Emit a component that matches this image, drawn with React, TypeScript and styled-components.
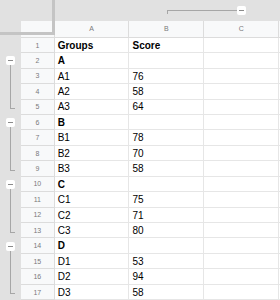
import styled, { createGlobalStyle } from "styled-components";

const GUTTER = 21;
const NUM_W = 33.7;
const COL_W = 74.8;
const HEAD_H = 16.8;
const ROW_H = 15.44;

const GlobalStyle = createGlobalStyle`
  html, body {
    margin: 0;
    padding: 0;
    background: #e1e1e1;
  }
  body {
    font-family: "Liberation Sans", Arial, sans-serif;
  }
`;

const Page = styled.div`
  position: relative;
  width: 280px;
  height: 300px;
  overflow: hidden;
  background: #e1e1e1;
  display: flex;
  flex-direction: column;
`;

const TopGutter = styled.div`
  height: ${GUTTER}px;
  flex-shrink: 0;
  display: flex;
  padding-left: ${GUTTER + NUM_W + COL_W}px;
`;

const TopSlot = styled.div<{ $kind: "start" | "button" }>`
  position: relative;
  width: ${COL_W}px;
  flex-shrink: 0;
  display: flex;
  align-items: center;
  justify-content: center;

  &::before {
    content: "";
    position: absolute;
    top: 10px;
    height: 1px;
    background: #a6a6a6;
    left: ${(p) => (p.$kind === "start" ? "50%" : "0")};
    right: ${(p) => (p.$kind === "start" ? "0" : "calc(50% + 4px)")};
  }

  &::after {
    content: "";
    display: ${(p) => (p.$kind === "start" ? "block" : "none")};
    position: absolute;
    left: 50%;
    top: 10px;
    width: 1px;
    height: 4px;
    background: #a6a6a6;
  }
`;

const MinusButton = styled.div`
  position: relative;
  z-index: 1;
  width: 9px;
  height: 9px;
  border-radius: 2px;
  background: #ffffff;
  display: flex;
  align-items: center;
  justify-content: center;

  &::before {
    content: "";
    width: 5px;
    height: 1px;
    background: #8a8a8a;
  }
`;

const Body = styled.div`
  display: flex;
  flex: 1;
`;

const LeftGutter = styled.div`
  width: ${GUTTER}px;
  flex-shrink: 0;
  display: flex;
  flex-direction: column;
`;

const GutterSpacer = styled.div`
  height: ${HEAD_H}px;
  flex-shrink: 0;
`;

type SlotKind = "none" | "button" | "line" | "end";

const LeftSlot = styled.div<{ $kind: SlotKind }>`
  position: relative;
  height: ${ROW_H}px;
  flex-shrink: 0;
  display: flex;
  align-items: center;
  justify-content: center;

  &::before {
    content: "";
    display: ${(p) => (p.$kind === "none" ? "none" : "block")};
    position: absolute;
    left: 10px;
    width: 1px;
    background: #a6a6a6;
    top: ${(p) => (p.$kind === "button" ? "calc(50% + 4px)" : "0")};
    bottom: ${(p) => (p.$kind === "end" ? "45%" : "0")};
  }

  &::after {
    content: "";
    display: ${(p) => (p.$kind === "end" ? "block" : "none")};
    position: absolute;
    left: 10px;
    top: 55%;
    width: 5px;
    height: 1px;
    background: #a6a6a6;
  }
`;

const Sheet = styled.div`
  display: flex;
  flex-direction: column;
  background: #ffffff;
`;

const Row = styled.div<{ $head?: boolean }>`
  display: grid;
  grid-template-columns: ${NUM_W}px repeat(4, ${COL_W}px);
  height: ${(p) => (p.$head ? HEAD_H : ROW_H)}px;
  flex-shrink: 0;
`;

const HeadCell = styled.div`
  box-sizing: border-box;
  background: #f8f9fa;
  border-right: 1px solid #dcdcdc;
  border-bottom: 1px solid #dcdcdc;
  color: #7a7a7a;
  font-size: 7px;
  display: flex;
  align-items: center;
  justify-content: center;
`;

const Cell = styled.div<{ $bold?: boolean }>`
  box-sizing: border-box;
  border-right: 1px solid #e6e6e6;
  border-bottom: 1px solid #e6e6e6;
  font-size: 10px;
  font-weight: ${(p) => (p.$bold ? 700 : 400)};
  color: #000000;
  padding: 0 3px 1.5px;
  display: flex;
  align-items: flex-end;
  white-space: nowrap;
  overflow: hidden;
`;

const FreezeBar = styled.div<{ $dir: "v" | "h" }>`
  position: absolute;
  background: #c4c4c4;
  left: ${(p) => (p.$dir === "v" ? 52 : 0)}px;
  top: ${(p) => (p.$dir === "v" ? 0 : 32)}px;
  width: ${(p) => (p.$dir === "v" ? 3 : 55)}px;
  height: ${(p) => (p.$dir === "v" ? 35 : 3)}px;
`;

const rows: [string, string, boolean][] = [
  ["Groups", "Score", true],
  ["A", "", true],
  ["A1", "76", false],
  ["A2", "58", false],
  ["A3", "64", false],
  ["B", "", true],
  ["B1", "78", false],
  ["B2", "70", false],
  ["B3", "58", false],
  ["C", "", true],
  ["C1", "75", false],
  ["C2", "71", false],
  ["C3", "80", false],
  ["D", "", true],
  ["D1", "53", false],
  ["D2", "94", false],
  ["D3", "58", false],
];

function slotKind(rowNum: number): SlotKind {
  if (rowNum < 2) return "none";
  const pos = (rowNum - 2) % 4;
  if (pos === 0) return "button";
  if (pos === 3) return "end";
  return "line";
}

export default function App() {
  return (
    <>
      <GlobalStyle />
      <Page>
        <TopGutter>
          <TopSlot $kind="start" />
          <TopSlot $kind="button">
            <MinusButton />
          </TopSlot>
        </TopGutter>
        <Body>
          <LeftGutter>
            <GutterSpacer />
            {rows.map((_, i) => {
              const kind = slotKind(i + 1);
              return (
                <LeftSlot key={i} $kind={kind}>
                  {kind === "button" && <MinusButton />}
                </LeftSlot>
              );
            })}
          </LeftGutter>
          <Sheet>
            <Row $head>
              <HeadCell />
              <HeadCell>A</HeadCell>
              <HeadCell>B</HeadCell>
              <HeadCell>C</HeadCell>
              <HeadCell />
            </Row>
            {rows.map(([a, b, bold], i) => (
              <Row key={i}>
                <HeadCell>{i + 1}</HeadCell>
                <Cell $bold={bold}>{a}</Cell>
                <Cell $bold={bold}>{b}</Cell>
                <Cell />
                <Cell />
              </Row>
            ))}
          </Sheet>
        </Body>
        <FreezeBar $dir="v" />
        <FreezeBar $dir="h" />
      </Page>
    </>
  );
}
